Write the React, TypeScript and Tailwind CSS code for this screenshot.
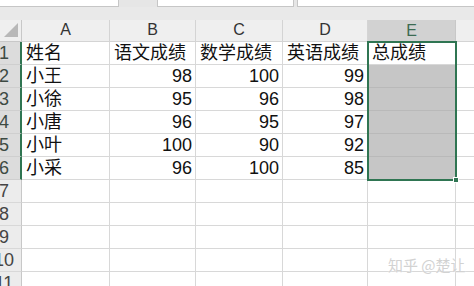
const COLS = ['A', 'B', 'C', 'D', 'E'];

const DATA: (string | number | null)[][] = [
  ['姓名', '语文成绩', '数学成绩', '英语成绩', '总成绩'],
  ['小王', 98, 100, 99, null],
  ['小徐', 95, 96, 98, null],
  ['小唐', 96, 95, 97, null],
  ['小叶', 100, 90, 92, null],
  ['小采', 96, 100, 85, null],
  [null, null, null, null, null],
  [null, null, null, null, null],
  [null, null, null, null, null],
  [null, null, null, null, null],
  [null, null, null, null, null],
];

const font = "font-['Liberation_Sans','Noto_Sans_CJK_SC',sans-serif]";

export default function App() {
  return (
    <div className={`relative w-[474px] h-[286px] overflow-hidden bg-white ${font}`}>
      {/* formula bar remnants */}
      <div className="flex h-[7px] bg-[#e6e6e6]">
        <div className="w-[119px] bg-white border-r border-b border-[#c6c6c6]" />
        <div className="w-[38px]" />
        <div className="w-[137px] bg-white border-l border-r border-b border-[#c6c6c6]" />
        <div className="flex-1 ml-[3px] bg-white border-l border-b border-[#c6c6c6]" />
      </div>
      <div className="h-[13px] bg-[#e9e9e9]" />

      <div className="relative grid grid-cols-[22px_88px_86px_87px_85px_88px_1fr] grid-rows-[22px_repeat(11,23px)]">
        {/* corner */}
        <div className="relative bg-[#efefef] border-r border-b border-[#c8c8c8]">
          <div className="absolute right-[3px] bottom-[4px] w-0 h-0 border-l-[14px] border-l-transparent border-b-[14px] border-b-[#b8b8b8]" />
        </div>
        {COLS.map((c) => (
          <div
            key={c}
            className={
              c === 'E'
                ? 'flex items-center justify-center bg-[#d2d2d2] border-r border-[#c8c8c8] text-[16px] text-[#3c6b52] pb-[1px]'
                : 'flex items-center justify-center bg-[#efefef] border-r border-b border-[#d4d4d4] text-[16px] text-[#333] pb-[1px]'
            }
          >
            {c}
          </div>
        ))}
        <div className="bg-[#efefef] border-b border-[#d4d4d4]" />

        {DATA.map((row, i) => {
          const sel = i < 6;
          return (
            <div key={i} className="contents">
              <div
                className={
                  sel
                    ? 'overflow-hidden bg-[#dcdcdc] border-r-2 border-r-[#2f7552] border-b border-b-[#cfcfcf]'
                    : 'overflow-hidden bg-[#ececec] border-r border-r-[#c8c8c8] border-b border-b-[#d8d8d8]'
                }
              >
                <div className={`w-[32px] -ml-[12px] h-full flex items-center justify-center text-[18px] ${sel ? 'text-[#3d4a43]' : 'text-[#444]'}`}>
                  {i + 1}
                </div>
              </div>
              {row.map((v, j) => {
                const gray = j === 4 && i >= 1 && i <= 5;
                const num = typeof v === 'number';
                return (
                  <div
                    key={j}
                    className={`flex items-center border-r border-b text-[18px] text-[#111] leading-none whitespace-nowrap ${
                      gray ? 'bg-[#c6c6c6] border-[#b9b9b9]' : 'border-[#d8d8d8]'
                    } ${num ? 'justify-end pr-[3px]' : 'pl-[4px]'}`}
                  >
                    {v}
                  </div>
                );
              })}
              <div className="border-b border-[#d8d8d8]" />
            </div>
          );
        })}

        {/* selection E1:E6 */}
        <div className="absolute left-[367px] top-[21px] w-[90px] h-[140px] border-2 border-[#2f7552] pointer-events-none" />
        <div className="absolute left-[453px] top-[157px] w-[6px] h-[6px] bg-[#2f7552] border border-white" />
      </div>

      <div className="absolute left-[388px] top-[254px] whitespace-nowrap text-[15px] text-[#d2d2d2] [text-shadow:0_0_2px_#fff] font-['Noto_Sans_CJK_SC',sans-serif]">
        知乎 @楚让
      </div>
    </div>
  );
}
